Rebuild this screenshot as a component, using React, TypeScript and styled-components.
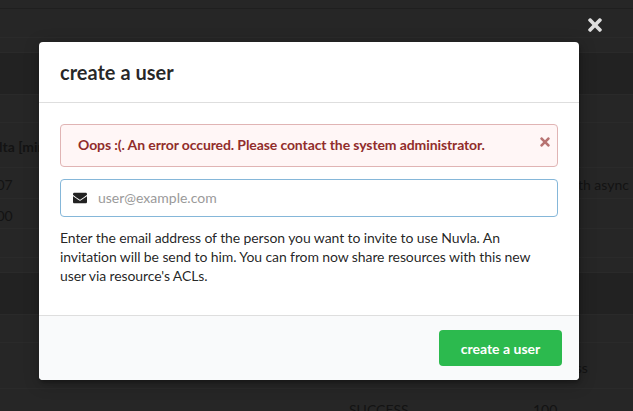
import React from 'react';
import styled, { createGlobalStyle } from 'styled-components';
import { FaEnvelope, FaTimes } from 'react-icons/fa';

const GlobalStyle = createGlobalStyle`
  html, body {
    margin: 0;
    padding: 0;
    width: 633px;
    height: 411px;
    overflow: hidden;
    background: #262626;
  }
  * {
    box-sizing: border-box;
  }
`;

const Page = styled.div`
  position: relative;
  width: 633px;
  height: 411px;
  overflow: hidden;
  font-family: 'Lato', 'Helvetica Neue', Arial, sans-serif;
  font-size: 14px;
  line-height: 20px;
`;

const BackTable = styled.div`
  display: flex;
  flex-direction: column;
  margin-left: -15px;
  width: 648px;
  color: #131313;
`;

const BackRow = styled.div<{ $height: number; $band?: boolean; $line?: string }>`
  flex: 0 0 ${(props) => props.$height}px;
  height: ${(props) => props.$height}px;
  display: grid;
  grid-template-columns: 364px 184px 100px;
  align-items: center;
  background: ${(props) => (props.$band ? '#222222' : '#262626')};
  border-bottom: 1px solid ${(props) => props.$line || '#2a2a2a'};
`;

const BackCell = styled.div<{ $bold?: boolean }>`
  font-weight: ${(props) => (props.$bold ? 700 : 400)};
  margin-left: ${(props) => (props.$bold ? '-4px' : '0')};
  padding-top: 4px;
  white-space: nowrap;
`;

const Dimmer = styled.div`
  position: absolute;
  inset: 0;
  padding: 42px 0 0 39px;
`;

const CloseModal = styled.div`
  position: absolute;
  top: 15px;
  left: 585px;
  color: #dedede;
  font-size: 20px;
  line-height: 20px;
  display: flex;
`;

const Modal = styled.div`
  width: 540px;
  height: 338px;
  display: flex;
  flex-direction: column;
  background: #fff;
  border-radius: 4px;
  box-shadow: 1px 3px 3px 0 rgba(0, 0, 0, 0.2), 1px 3px 15px 2px rgba(0, 0, 0, 0.2);
`;

const ModalHeader = styled.div`
  flex: 0 0 61px;
  display: flex;
  align-items: center;
  padding: 0 21px;
  border-bottom: 1px solid #dedede;
  font-size: 20px;
  font-weight: 700;
  color: rgba(0, 0, 0, 0.85);
`;

const ModalContent = styled.div`
  flex: 1;
  display: flex;
  flex-direction: column;
  padding: 21px;
  color: rgba(0, 0, 0, 0.87);
`;

const ErrorMessage = styled.div`
  position: relative;
  height: 43px;
  display: flex;
  align-items: center;
  padding: 0 17px 2px;
  background: #fff6f6;
  border: 1px solid #e0b4b4;
  border-radius: 4px;
  color: #912d2b;
  font-weight: 700;
  letter-spacing: -0.1px;
`;

const DismissIcon = styled.span`
  position: absolute;
  top: 10px;
  right: 5px;
  display: flex;
  color: #912d2b;
  opacity: 0.65;
  font-size: 14px;
`;

const InputBox = styled.label`
  margin-top: 12px;
  height: 38px;
  display: flex;
  align-items: center;
  padding: 0 12px;
  gap: 11px;
  border: 1px solid #85b7d9;
  border-radius: 4px;
  color: #222;
  font-size: 14px;
`;

const EmailInput = styled.input`
  flex: 1;
  min-width: 0;
  border: 0;
  outline: 0;
  padding: 0;
  background: transparent;
  font: inherit;
  color: #333;
  &::placeholder {
    color: #9a9a9a;
    opacity: 1;
  }
`;

const HelpText = styled.p`
  margin: 11px 0 0;
  line-height: 19px;
  letter-spacing: -0.1px;
`;

const ModalActions = styled.div`
  flex: 0 0 65px;
  display: flex;
  justify-content: flex-end;
  align-items: flex-start;
  padding: 14px 17px 0 0;
  background: #f9fafb;
  border-top: 1px solid #dedede;
  border-radius: 0 0 4px 4px;
`;

const PrimaryButton = styled.button`
  width: 123px;
  height: 36px;
  border: 0;
  border-radius: 4px;
  background: #2cba4e;
  color: #fff;
  font-family: inherit;
  font-size: 14px;
  font-weight: 700;
`;

const rows = [
  { height: 9, line: '#1f1f1f' },
  { height: 29 },
  { height: 15 },
  { height: 42, band: true },
  { height: 28 },
  { height: 45, cells: ['Delta [min]'], bold: true },
  { height: 31, cells: ['1.07', '', 'save with async'] },
  { height: 30, cells: ['1.00'] },
  { height: 29 },
  { height: 15 },
  { height: 42, band: true },
  { height: 28 },
  { height: 46, cells: ['', '', 'hardness'] },
  { height: 38, cells: ['', 'SUCCESS', '100'] },
];

export default function App() {
  return (
    <Page>
      <GlobalStyle />
      <BackTable>
        {rows.map((row, i) => (
          <BackRow key={i} $height={row.height} $band={row.band} $line={row.line}>
            {(row.cells || []).map((cell, j) => (
              <BackCell key={j} $bold={row.bold}>
                {cell}
              </BackCell>
            ))}
          </BackRow>
        ))}
      </BackTable>
      <Dimmer>
        <CloseModal>
          <FaTimes />
        </CloseModal>
        <Modal>
          <ModalHeader>create a user</ModalHeader>
          <ModalContent>
            <ErrorMessage>
              Oops :(. An error occured. Please contact the system administrator.
              <DismissIcon>
                <FaTimes />
              </DismissIcon>
            </ErrorMessage>
            <InputBox>
              <FaEnvelope />
              <EmailInput placeholder="user@example.com" />
            </InputBox>
            <HelpText>
              Enter the email address of the person you want to invite to use Nuvla. An invitation
              will be send to him. You can from now share resources with this new user via
              resource's ACLs.
            </HelpText>
          </ModalContent>
          <ModalActions>
            <PrimaryButton>create a user</PrimaryButton>
          </ModalActions>
        </Modal>
      </Dimmer>
    </Page>
  );
}
